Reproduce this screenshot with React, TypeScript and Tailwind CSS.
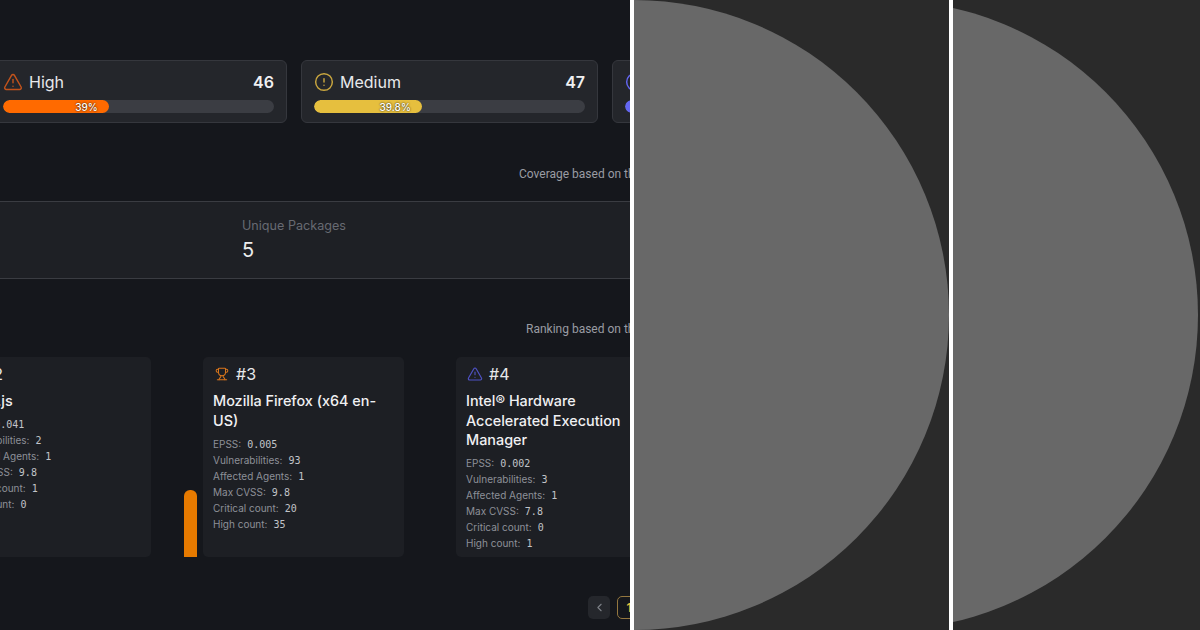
import { ChevronLeft, CircleAlert, Info, TriangleAlert, Trophy } from "lucide-react";
import type { ReactNode } from "react";

const severities = [
  { label: "High", count: 46, pct: "39%", width: "w-[39%]", fill: "bg-[#ff6a00]", icon: <TriangleAlert size={20} strokeWidth={1.75} className="text-[#c2531c]" /> },
  { label: "Medium", count: 47, pct: "39.8%", width: "w-[39.8%]", fill: "bg-[#e6bf3e]", icon: <CircleAlert size={20} strokeWidth={1.75} className="text-[#c9a63f]" /> },
  { label: "Low", count: 25, pct: "21.2%", width: "w-[21.2%]", fill: "bg-[#6366f1]", icon: <Info size={20} strokeWidth={1.75} className="text-[#6366f1]" /> },
];

type Rank = {
  rank: number;
  name: string;
  icon: ReactNode;
  rows: [string, string][];
};

const ranks: Rank[] = [
  {
    rank: 2,
    name: "Node.js",
    icon: <Trophy size={14} strokeWidth={1.75} className="text-[#9ca3af]" />,
    rows: [["EPSS:", "0.041"], ["Vulnerabilities:", "2"], ["Affected Agents:", "1"], ["Max CVSS:", "9.8"], ["Critical count:", "1"], ["High count:", "0"]],
  },
  {
    rank: 3,
    name: "Mozilla Firefox (x64 en-US)",
    icon: <Trophy size={14} strokeWidth={1.75} className="text-[#d9761c]" />,
    rows: [["EPSS:", "0.005"], ["Vulnerabilities:", "93"], ["Affected Agents:", "1"], ["Max CVSS:", "9.8"], ["Critical count:", "20"], ["High count:", "35"]],
  },
  {
    rank: 4,
    name: "Intel® Hardware Accelerated Execution Manager",
    icon: <TriangleAlert size={16} strokeWidth={1.75} className="text-[#4f52c4] ml-[-1px]" />,
    rows: [["EPSS:", "0.002"], ["Vulnerabilities:", "3"], ["Affected Agents:", "1"], ["Max CVSS:", "7.8"], ["Critical count:", "0"], ["High count:", "1"]],
  },
];

const SeverityCard = ({ item }: { item: (typeof severities)[number] }) => (
  <div className="w-[297px] h-[63px] shrink-0 rounded-md border border-[#35373d] bg-[#24262b] px-[12px] pt-[11px]">
    <div className="flex items-center h-[20px]">
      <span className="mr-[6px] shrink-0">{item.icon}</span>
      <span className="text-[16px] text-[#e8e9eb]">{item.label}</span>
      <span className="ml-auto text-[16px] font-semibold text-[#f0f0f2]">{item.count}</span>
    </div>
    <div className="mt-[8px] h-[13px] rounded-full bg-[#3b3d43] overflow-hidden">
      <div className={`h-full rounded-full flex items-center justify-end pr-[11px] ${item.width} ${item.fill}`}>
        <span className="text-[10px] leading-none font-medium text-white [text-shadow:0_0_2px_#000]">{item.pct}</span>
      </div>
    </div>
  </div>
);

const RankCard = ({ item }: { item: Rank }) => (
  <div className="w-[201px] h-[200px] shrink-0 rounded-[5px] bg-[#1d1f24] px-[10px] pt-[8px]">
    <div className="flex items-center h-[18px] pl-[2px]">
      <span className="w-[21px] shrink-0">{item.icon}</span>
      <span className="text-[16px] text-[#e8e9eb]">#{item.rank}</span>
    </div>
    <div className="mt-[8px] text-[14.4px] leading-[19.5px] font-medium text-[#f0f0f2]">{item.name}</div>
    <div className="mt-[6px] flex flex-col">
      {item.rows.map(([label, value]) => (
        <div key={label} className="flex items-center h-[16px] text-[10px] gap-[6px]">
          <span className="text-[#8d9098]">{label}</span>
          <span className="font-['DejaVu_Sans_Mono',monospace] text-[10px] text-[#c2c4c9]">{value}</span>
        </div>
      ))}
    </div>
  </div>
);

const Halfmoon = ({ width, offset }: { width: string; offset: string }) => (
  <div className={`${width} h-[630px] shrink-0 overflow-hidden bg-[#2a2a2a]`}>
    <div className={`${offset} w-[630px] h-[630px] rounded-full bg-[#686868]`} />
  </div>
);

export default function App() {
  return (
    <div className="flex w-[1200px] h-[630px] overflow-hidden bg-white font-['Inter',sans-serif]">
      <div className="w-[630px] h-[630px] shrink-0 overflow-hidden bg-[#15171c] pt-[60px]">
        <div className="flex gap-[14px] ml-[-10px] w-[1000px]">
          {severities.map((s) => (
            <SeverityCard key={s.label} item={s} />
          ))}
        </div>

        <div className="mt-[43px] pl-[519px] h-[16px] whitespace-nowrap font-['Roboto',sans-serif] text-[12px] leading-[16px] text-[#9a9ca3]">
          Coverage based on the last 30 days
        </div>

        <div className="mt-[19px] h-[78px] border-y border-[#3a3c42] bg-[#1e2025] pl-[242px] pt-[15px]">
          <div className="text-[12.6px] leading-[18px] text-[#676a72]">Unique Packages</div>
          <div className="mt-[1px] text-[20px] leading-[28px] text-[#eceded]">5</div>
        </div>

        <div className="mt-[42px] pl-[526px] h-[16px] whitespace-nowrap font-['Roboto',sans-serif] text-[12px] leading-[16px] text-[#9a9ca3]">
          Ranking based on the EPSS score
        </div>

        <div className="mt-[20px] flex ml-[-50px] w-[800px]">
          <RankCard item={ranks[0]} />
          <div className="w-[52px] shrink-0 flex items-end pl-[33px]">
            <div className="w-[13px] h-[67px] rounded-t-[6px] bg-[#e67a00]" />
          </div>
          <RankCard item={ranks[1]} />
          <div className="w-[52px] shrink-0" />
          <RankCard item={ranks[2]} />
        </div>

        <div className="mt-[39px] flex gap-[7px] pl-[588px] w-[700px]">
          <div className="w-[22px] h-[23px] rounded-[5px] bg-[#25272c] flex items-center justify-center text-[#7d8087]">
            <ChevronLeft size={13} />
          </div>
          <div className="w-[24px] h-[23px] rounded-[5px] border border-[#94773f] flex items-center justify-center text-[12px] font-semibold text-[#e6bf3e]">
            1
          </div>
        </div>
      </div>

      <div className="w-[4px] shrink-0" />
      <Halfmoon width="w-[315px]" offset="ml-[-315px]" />
      <div className="w-[4px] shrink-0" />
      <Halfmoon width="w-[247px]" offset="ml-[-385px]" />
    </div>
  );
}
